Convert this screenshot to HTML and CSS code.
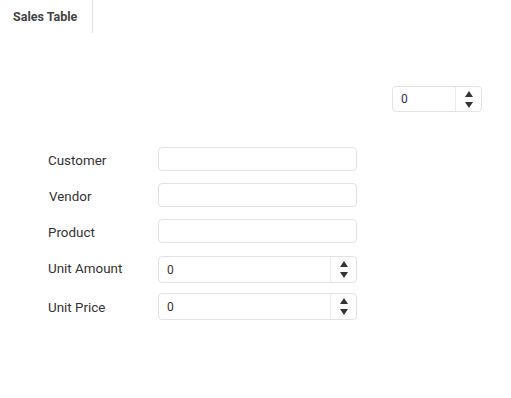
FILE: index.html
```html
<!DOCTYPE html>
<html>
<head>
	<meta charset="utf-8">
	<title>Sales Table</title>
	<link rel="stylesheet" href="styles.css">
</head>
<body>
	<div class="tabs">
		<div class="tab">Sales Table</div>
	</div>

	<div class="toolbar">
		<div class="spinner spinner-top">
			<span class="spinner-value">0</span>
			<span class="spinner-buttons">
				<span class="arrow-up"></span>
				<span class="arrow-down"></span>
			</span>
		</div>
	</div>

	<form class="sales-form">
		<div class="row">
			<label>Customer</label>
			<div class="field"></div>
		</div>
		<div class="row">
			<label class="shift">Vendor</label>
			<div class="field"></div>
		</div>
		<div class="row row-wide">
			<label>Product</label>
			<div class="field"></div>
		</div>
		<div class="row row-short">
			<label class="raise">Unit Amount</label>
			<div class="spinner spinner-field">
				<span class="spinner-value">0</span>
				<span class="spinner-buttons">
					<span class="arrow-up"></span>
					<span class="arrow-down"></span>
				</span>
			</div>
		</div>
		<div class="row">
			<label>Unit Price</label>
			<div class="spinner spinner-field">
				<span class="spinner-value">0</span>
				<span class="spinner-buttons">
					<span class="arrow-up"></span>
					<span class="arrow-down"></span>
				</span>
			</div>
		</div>
	</form>
</body>
</html>
```

FILE: styles.css
```css
body {
	margin: 0;
	padding: 0;
	font-family: Roboto, "Liberation Sans", sans-serif;
	font-size: 13px;
	color: #333;
	background-color: #fff;
}

.tabs {
	display: flex;
	height: 33px;
}

.tab {
	padding: 0 15px 0 13px;
	line-height: 33px;
	font-size: 12.5px;
	font-weight: bold;
	color: #444;
	border-right: 1px solid #e3e3e3;
}

.toolbar {
	display: flex;
	justify-content: flex-end;
	margin-top: 53px;
	padding-right: 29px;
}

.spinner {
	display: flex;
	box-sizing: border-box;
	border: 1px solid #e3e3e3;
	border-radius: 4px;
	background-color: #fff;
}

.spinner-top {
	width: 90px;
	height: 26px;
}

.spinner-value {
	flex: 1;
	padding-left: 8px;
	display: flex;
	align-items: center;
	font-size: 12px;
	color: #2b2b55;
}

.spinner-field .spinner-value {
	color: #3a3320;
}

.spinner-buttons {
	width: 25px;
	border-left: 1px solid #ececec;
	display: flex;
	flex-direction: column;
	align-items: center;
	justify-content: center;
	gap: 5px;
}

.arrow-up {
	width: 0;
	height: 0;
	border-left: 4px solid transparent;
	border-right: 4px solid transparent;
	border-bottom: 6px solid #333;
}

.arrow-down {
	width: 0;
	height: 0;
	border-left: 4px solid transparent;
	border-right: 4px solid transparent;
	border-top: 6px solid #333;
}

.sales-form {
	margin: 35px 0 0 0;
	padding-left: 47px;
}

.row {
	display: grid;
	grid-template-columns: 111px 199px;
	align-items: center;
	margin-bottom: 12px;
}

.row-wide {
	margin-bottom: 13px;
}

.row-short {
	margin-bottom: 10px;
}

.row label {
	padding-left: 1px;
	padding-top: 2px;
	font-size: 13.4px;
	color: #333;
}

.row label.shift {
	padding-left: 2px;
}

.row label.raise {
	padding-top: 0;
	padding-bottom: 2px;
}

.field {
	box-sizing: border-box;
	height: 24px;
	border: 1px solid #e3e3e3;
	border-radius: 4px;
}

.spinner-field {
	height: 27px;
}
```
